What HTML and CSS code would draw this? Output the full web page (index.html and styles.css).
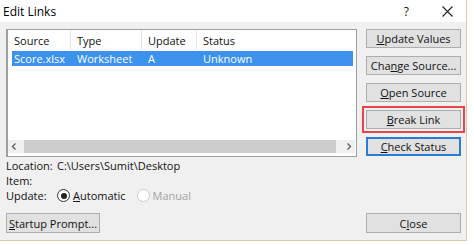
FILE: index.html
```html
<!DOCTYPE html>
<html lang="en">
<head>
    <meta charset="UTF-8">
    <title>Edit Links</title>
    <link rel="stylesheet" href="styles.css">
</head>
<body>
    <div class="window">
        <div class="titlebar">
            <span class="title">Edit Links</span>
            <span class="help">?</span>
            <svg class="close-x" width="11" height="11" viewBox="0 0 11 11">
                <path d="M0.5 0.5 L10.5 10.5 M10.5 0.5 L0.5 10.5" stroke="#222" stroke-width="1.1" fill="none"/>
            </svg>
        </div>
        <div class="body">
            <div class="left">
                <div class="listbox">
                    <div class="list-head">
                        <div class="col c1">Source</div>
                        <div class="col c2">Type</div>
                        <div class="col c3">Update</div>
                        <div class="col c4">Status</div>
                    </div>
                    <div class="list-row selected">
                        <div class="col c1">Score.xlsx</div>
                        <div class="col c2">Worksheet</div>
                        <div class="col c3">A</div>
                        <div class="col c4">Unknown</div>
                    </div>
                    <div class="list-space"></div>
                    <div class="hscroll">
                        <svg class="arrow" width="13" height="13" viewBox="0 0 13 13">
                            <path d="M7.5 3.5 L4.5 6.5 L7.5 9.5" stroke="#606060" stroke-width="1.4" fill="none"/>
                        </svg>
                        <div class="thumb"></div>
                        <svg class="arrow" width="13" height="13" viewBox="0 0 13 13">
                            <path d="M5.5 3.5 L8.5 6.5 L5.5 9.5" stroke="#606060" stroke-width="1.4" fill="none"/>
                        </svg>
                    </div>
                </div>
                <div class="info">
                    <div class="info-line"><span class="label">Location:</span><span>C:\Users\Sumit\Desktop</span></div>
                    <div class="info-line"><span class="label">Item:</span><span></span></div>
                    <div class="info-line">
                        <span class="label">Update:</span>
                        <span class="radio checked"></span><span class="radio-text"><u>A</u>utomatic</span>
                        <span class="radio disabled"></span><span class="radio-text muted">Manual</span>
                    </div>
                </div>
                <div class="btn startup"><u>S</u>tartup Prompt...</div>
            </div>
            <div class="right">
                <div class="btn"><u>U</u>pdate Values</div>
                <div class="btn">Cha<u>n</u>ge Source...</div>
                <div class="btn"><u>O</u>pen Source</div>
                <div class="btn marked"><u>B</u>reak Link</div>
                <div class="btn default"><u>C</u>heck Status</div>
                <div class="btn close">C<u>l</u>ose</div>
            </div>
        </div>
    </div>
</body>
</html>
```

FILE: styles.css
```css
body {
    margin: 0;
    background: #ffffff;
    font-family: 'Open Sans', sans-serif;
    font-size: 11px;
    color: #111111;
}

.window {
    width: 466px;
    height: 240px;
    background: #f0f0f0;
    border-right: 1px solid #d9c9a6;
    border-bottom: 1px solid #d9c9a6;
    display: flex;
    flex-direction: column;
}

.titlebar {
    height: 22px;
    background: #ffffff;
    display: flex;
    align-items: center;
    padding-left: 3px;
}

.title {
    font-size: 12px;
    color: #000;
    flex: 1;
}

.help {
    font-size: 12px;
    margin-right: 33px;
}

.close-x {
    margin-right: 13px;
}

.body {
    flex: 1;
    display: flex;
    padding: 7px 5px 7px 6px;
    gap: 9px;
}

.left {
    width: 351px;
    display: flex;
    flex-direction: column;
}

.listbox {
    height: 126px;
    background: #ffffff;
    border: 1px solid #a0a0a0;
    border-left: 2px solid #a0a0a0;
    display: flex;
    flex-direction: column;
}

.list-head {
    display: flex;
    height: 20px;
    align-items: stretch;
}

.list-head .col {
    display: flex;
    align-items: center;
    border-right: 1px solid #e5e5e5;
}

.list-head .c4 {
    border-right: none;
}

.col {
    padding-left: 6px;
    box-sizing: border-box;
    white-space: nowrap;
}

.c1 { width: 63px; padding-left: 6px; }
.c2 { width: 71px; }
.c3 { width: 55px; }
.c4 { flex: 1; }

.list-row {
    display: flex;
    height: 15px;
    line-height: 15px;
    margin: 1px 3px 0 4px;
}

.list-row .c1 {
    width: 59px;
    padding-left: 2px;
}

.selected {
    background: #3c92ec;
    color: #ffffff;
}

.list-space {
    flex: 1;
}

.hscroll {
    height: 13px;
    margin: 0 1px 3px 0;
    background: #f0f0f0;
    display: flex;
    align-items: center;
}

.thumb {
    flex: 1;
    height: 13px;
    background: #cdcdcd;
    margin: 0 6px 0 3px;
}

.info {
    margin-top: 1px;
}

.info-line {
    height: 15px;
    line-height: 15px;
    display: flex;
    align-items: center;
}

.label {
    width: 51px;
}

.radio {
    width: 13px;
    height: 13px;
    border: 1px solid #333;
    border-radius: 50%;
    box-sizing: border-box;
    background: #fff;
    margin-right: 3px;
    position: relative;
}

.radio.checked::after {
    content: '';
    position: absolute;
    left: 2.5px;
    top: 2.5px;
    width: 6px;
    height: 6px;
    border-radius: 50%;
    background: #222;
}

.radio.disabled {
    border-color: #cccccc;
}

.radio-text {
    margin-right: 11px;
}

.muted {
    color: #a3a3a3;
}

.btn {
    height: 19px;
    box-sizing: border-box;
    background: #e1e1e1;
    border: 1px solid #adadad;
    display: flex;
    align-items: center;
    justify-content: center;
    white-space: nowrap;
}

.startup {
    width: 94px;
    margin-top: 10px;
    height: 20px;
}

.right {
    width: 95px;
    display: flex;
    flex-direction: column;
    gap: 8px;
}

.marked {
    outline: 2px solid #e8444c;
    outline-offset: 2px;
}

.default {
    border: 2px solid #2a7bd4;
}

.close {
    margin-top: auto;
    height: 20px;
}
```
